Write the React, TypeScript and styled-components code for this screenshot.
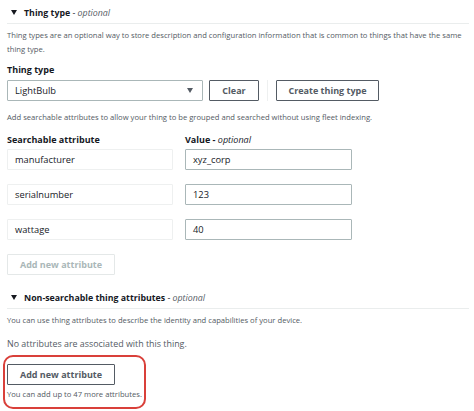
import React from "react";
import styled, { createGlobalStyle } from "styled-components";

const Global = createGlobalStyle`
  html, body { margin: 0; padding: 0; background: #ffffff; }
  body { font-family: "Open Sans", "Noto Sans", Arial, sans-serif; color: #16191f; }
  * { box-sizing: border-box; }
`;

const Page = styled.div`
  width: 474px;
  height: 411px;
  padding: 0 5px 0 7px;
  overflow: hidden;
`;

const Header = styled.div<{ $top?: number }>`
  display: flex;
  align-items: center;
  gap: 7px;
  height: 24px;
  padding: 2px 0 0 4px;
  margin-top: ${(p) => p.$top ?? 0}px;
  border-bottom: 1px solid #eaeded;
  font-size: 8.8px;
  line-height: 14px;
`;

const Caret = styled.span`
  width: 0;
  height: 0;
  border-left: 3px solid transparent;
  border-right: 3px solid transparent;
  border-top: 5px solid #16191f;
`;

const Title = styled.span`
  font-weight: 700;
  color: #16191f;
`;

const Optional = styled.i`
  font-weight: 400;
  color: #545b64;
`;

const Desc = styled.p<{ $top: number }>`
  margin: ${(p) => p.$top}px 0 0;
  font-size: 7.65px;
  line-height: 14px;
  white-space: nowrap;
  color: #545b64;
`;

const Label = styled.div<{ $top: number }>`
  margin-top: ${(p) => p.$top}px;
  font-size: 9px;
  line-height: 14px;
  font-weight: 700;
  color: #16191f;
`;

const ToolRow = styled.div`
  display: flex;
  align-items: center;
  margin-top: 3px;
  height: 21px;
`;

const Select = styled.div`
  display: flex;
  align-items: center;
  justify-content: space-between;
  width: 196px;
  height: 21px;
  padding: 0 9px 0 7px;
  border: 1px solid #aab7b8;
  border-radius: 1px;
  font-size: 9.3px;
  color: #16191f;
`;

const SelectCaret = styled.span`
  width: 0;
  height: 0;
  border-left: 3px solid transparent;
  border-right: 3px solid transparent;
  border-top: 5px solid #545b64;
`;

const Button = styled.button<{ $w: number; $disabled?: boolean; $top?: number; $left?: number }>`
  display: block;
  width: ${(p) => p.$w}px;
  height: 21px;
  margin-top: ${(p) => p.$top ?? 0}px;
  margin-left: ${(p) => p.$left ?? 0}px;
  padding: 0;
  background: #ffffff;
  border: 1px solid ${(p) => (p.$disabled ? "#e4e8e8" : "#545b64")};
  border-radius: 1px;
  font-family: inherit;
  font-size: 9px;
  font-weight: 700;
  color: ${(p) => (p.$disabled ? "#aab7b8" : "#545b64")};
  cursor: pointer;
`;

const Sep = styled.span`
  width: 1px;
  height: 21px;
  background: #eef0f0;
  margin: 0 8px;
`;

const AttrGrid = styled.div`
  display: grid;
  grid-template-columns: 166px 167px;
  column-gap: 12px;
  margin-top: 9px;
`;

const ColLabel = styled.div`
  font-size: 9px;
  line-height: 14px;
  font-weight: 700;
  color: #16191f;
  margin-bottom: 2px;
`;

const Input = styled.div<{ $locked?: boolean; $last?: boolean }>`
  display: flex;
  align-items: center;
  height: 21px;
  padding: 0 7px;
  margin-bottom: ${(p) => (p.$last ? 0 : 14)}px;
  border: 1px solid ${(p) => (p.$locked ? "#eef0f0" : "#aab7b8")};
  border-radius: 1px;
  font-size: 9.3px;
  color: #16191f;
`;

const Empty = styled.p`
  margin: 9px 0 0;
  font-size: 8.9px;
  line-height: 16px;
  color: #545b64;
`;

const Highlight = styled.div`
  width: 143px;
  margin: 3px 0 0 -4px;
  padding: 7px 2px 7px 2px;
  border: 2px solid #d9403a;
  border-radius: 10px;
`;

const Hint = styled.div`
  margin-top: 3px;
  font-size: 7.65px;
  line-height: 12px;
  white-space: nowrap;
  color: #545b64;
`;

const rows = [
  { key: "manufacturer", value: "xyz_corp" },
  { key: "serialnumber", value: "123" },
  { key: "wattage", value: "40" },
];

export default function App() {
  return (
    <Page>
      <Global />
      <Header>
        <Caret />
        <span>
          <Title>Thing type</Title> - <Optional>optional</Optional>
        </span>
      </Header>
      <Desc $top={4}>
        Thing types are an optional way to store description and configuration information that is common to things that have the same
        <br />
        thing type.
      </Desc>
      <Label $top={7}>Thing type</Label>
      <ToolRow>
        <Select>
          <span>LightBulb</span>
          <SelectCaret />
        </Select>
        <Button $w={50} $left={6}>Clear</Button>
        <Sep />
        <Button $w={103}>Create thing type</Button>
      </ToolRow>
      <Desc $top={9}>
        Add searchable attributes to allow your thing to be grouped and searched without using fleet indexing.
      </Desc>
      <AttrGrid>
        <ColLabel>Searchable attribute</ColLabel>
        <ColLabel>
          Value - <Optional style={{ color: "#16191f" }}>optional</Optional>
        </ColLabel>
        {rows.map((r, i) => (
          <React.Fragment key={r.key}>
            <Input $locked $last={i === rows.length - 1}>{r.key}</Input>
            <Input $last={i === rows.length - 1}>{r.value}</Input>
          </React.Fragment>
        ))}
      </AttrGrid>
      <Button $w={108} $disabled $top={14}>
        Add new attribute
      </Button>
      <Header $top={10}>
        <Caret />
        <span>
          <Title>Non-searchable thing attributes</Title> - <Optional>optional</Optional>
        </span>
      </Header>
      <Desc $top={4}>You can use thing attributes to describe the identity and capabilities of your device.</Desc>
      <Empty>No attributes are associated with this thing.</Empty>
      <Highlight>
        <Button $w={108}>Add new attribute</Button>
        <Hint>You can add up to 47 more attributes.</Hint>
      </Highlight>
    </Page>
  );
}
